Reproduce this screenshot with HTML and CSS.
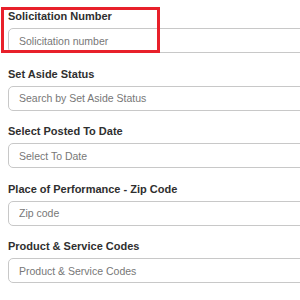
FILE: index.html
```html
<!DOCTYPE html>
<html lang="en">
<head>
  <meta charset="UTF-8">
  <meta name="viewport" content="width=device-width, initial-scale=1.0">
  <title>Search filters</title>
  <link rel="stylesheet" href="styles.css">
</head>
<body>
  <form class="filter-form">
    <div class="field field-highlight">
      <label for="sol-num">Solicitation Number</label>
      <input type="text" id="sol-num" placeholder="Solicitation number">
      <span class="highlight-box"></span>
    </div>
    <div class="field">
      <label for="set-aside">Set Aside Status</label>
      <input type="text" id="set-aside" placeholder="Search by Set Aside Status">
    </div>
    <div class="field">
      <label for="posted-to">Select Posted To Date</label>
      <input type="text" id="posted-to" placeholder="Select To Date">
    </div>
    <div class="field">
      <label for="zip">Place of Performance - Zip Code</label>
      <input type="text" id="zip" placeholder="Zip code">
    </div>
    <div class="field">
      <label for="psc">Product &amp; Service Codes</label>
      <input type="text" id="psc" placeholder="Product &amp; Service Codes">
    </div>
  </form>
</body>
</html>
```

FILE: styles.css
```css
*, *::before, *::after { box-sizing: border-box; }
html, body { overflow: hidden; }
body { margin: 0; background: #fff; font-family: "Liberation Sans", Arial, sans-serif; color: #333; }

.filter-form { width: 420px; padding: 10px 0 0 8px; display: flex; flex-direction: column; gap: 14.5px; }

.field { display: flex; flex-direction: column; gap: 5px; position: relative; }
.field label { font-size: 11px; font-weight: bold; color: #2f2f2f; line-height: 13px; }
.field input {
  width: 100%;
  height: 25px;
  padding: 0 10px;
  border: 1px solid #c8c8c8;
  border-radius: 5px;
  background: #fff;
  font-family: inherit;
  font-size: 10.5px;
  color: #333;
}
.field input::placeholder { color: #777; }

/* annotation box round the first field */
.highlight-box {
  position: absolute;
  left: -7px;
  top: -3px;
  width: 159px;
  height: 46px;
  border: 3px solid #e8202a;
  pointer-events: none;
}
```
